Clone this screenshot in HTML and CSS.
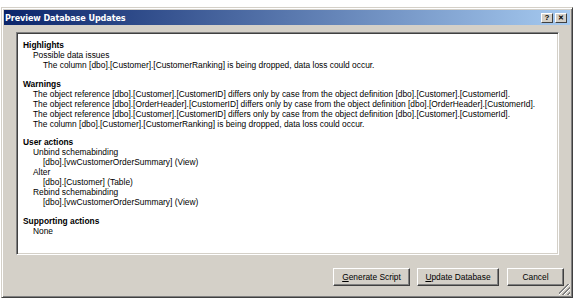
FILE: index.html
```html
<!DOCTYPE html>
<html lang="en">

<head>
    <title>Preview Database Updates</title>
    <meta charset="UTF-8">
    <link rel="stylesheet" href="styles.css">
</head>

<body>
    <div class="dlg">
        <div class="dlg-title">
            <div class="title">Preview Database Updates</div>
            <div class="dlg-caption-btns">
                <span class="cap-btn">?</span>
                <span class="cap-btn cap-close">&#x2715;</span>
            </div>
        </div>

        <div class="dlg-body">
            <div class="report">
                <div class="section">
                    <h4>Highlights</h4>
                    <div class="l1">Possible data issues</div>
                    <div class="l2">The column [dbo].[Customer].[CustomerRanking] is being dropped, data loss could occur.</div>
                </div>

                <div class="section">
                    <h4>Warnings</h4>
                    <div class="l1">The object reference [dbo].[Customer].[CustomerID] differs only by case from the object definition [dbo].[Customer].[CustomerId].</div>
                    <div class="l1">The object reference [dbo].[OrderHeader].[CustomerID] differs only by case from the object definition [dbo].[OrderHeader].[CustomerId].</div>
                    <div class="l1">The object reference [dbo].[Customer].[CustomerID] differs only by case from the object definition [dbo].[Customer].[CustomerId].</div>
                    <div class="l1">The column [dbo].[Customer].[CustomerRanking] is being dropped, data loss could occur.</div>
                </div>

                <div class="section">
                    <h4>User actions</h4>
                    <div class="l1">Unbind schemabinding</div>
                    <div class="l2">[dbo].[vwCustomerOrderSummary] (View)</div>
                    <div class="l1">Alter</div>
                    <div class="l2">[dbo].[Customer] (Table)</div>
                    <div class="l1">Rebind schemabinding</div>
                    <div class="l2">[dbo].[vwCustomerOrderSummary] (View)</div>
                </div>

                <div class="section">
                    <h4>Supporting actions</h4>
                    <div class="l1">None</div>
                </div>
            </div>

            <div class="dlg-buttons">
                <button class="btn btn-script"><u>G</u>enerate Script</button>
                <button class="btn btn-update"><u>U</u>pdate Database</button>
                <button class="btn btn-cancel">Cancel</button>
            </div>
        </div>
        <div class="grip"></div>
    </div>
</body>

</html>
```

FILE: styles.css
```css
* {
    box-sizing: border-box;
    font-family: 'Liberation Sans', Arial, sans-serif;
}

body {
    margin: 0;
    padding: 7px 0 0 1px;
    background-color: #ffffff;
    width: 578px;
    height: 304px;
    overflow: hidden;
}

.dlg {
    position: relative;
    width: 572px;
    height: 291px;
    background-color: #d4d0c8;
    border: 1px solid #404040;
    border-top-color: #d4d0c8;
    border-left-color: #d4d0c8;
    box-shadow: inset 1px 1px 0 #ffffff, inset -1px -1px 0 #808080;
    padding: 2px;
    display: flex;
    flex-direction: column;
}

.dlg-title {
    height: 15px;
    background: linear-gradient(to right, #0a246a, #a6caf0);
    display: flex;
    align-items: center;
    padding: 0 3px 0 1px;
}

.dlg-title .title {
    flex: 1;
    color: #ffffff;
    font-weight: bold;
    font-size: 8.1px;
    font-family: 'DejaVu Sans', sans-serif;
    letter-spacing: -0.1px;
}

.dlg-caption-btns {
    display: flex;
    gap: 2px;
}

.cap-btn {
    width: 12px;
    height: 10px;
    background-color: #d4d0c8;
    border: 1px solid #404040;
    border-top-color: #ffffff;
    border-left-color: #ffffff;
    font-size: 8px;
    font-weight: bold;
    line-height: 8px;
    text-align: center;
    color: #000000;
}

.cap-close {
    font-size: 7px;
}

.dlg-body {
    flex: 1;
    display: flex;
    flex-direction: column;
    padding: 7px 11px 8px 12px;
}

.report {
    height: 223px;
    background-color: #ffffff;
    border: 1px solid #ffffff;
    border-top-color: #808080;
    border-left-color: #808080;
    box-shadow: inset 1px 1px 0 #404040, inset -1px -1px 0 #d4d0c8;
    padding: 7px 6px;
    font-size: 8.4px;
    line-height: 10px;
    color: #000000;
}

.section + .section {
    margin-top: 8.5px;
}

.report h4 {
    margin: 0;
    font-size: 8.4px;
    font-weight: bold;
}

.l1 {
    padding-left: 10px;
}

.l2 {
    padding-left: 20px;
}

.dlg-buttons {
    display: flex;
    justify-content: flex-end;
    gap: 7px;
    margin-top: 13px;
    margin-right: -5px;
}

.btn {
    height: 18px;
    background-color: #d4d0c8;
    border: 1px solid #404040;
    border-top-color: #ffffff;
    border-left-color: #ffffff;
    box-shadow: inset -1px -1px 0 #808080;
    font-size: 8.4px;
    color: #000000;
    padding: 0;
}

.btn-script {
    width: 77px;
}

.btn-update {
    width: 82px;
}

.btn-cancel {
    width: 57px;
    margin-left: 1px;
}

.grip {
    position: absolute;
    right: 2px;
    bottom: 2px;
    width: 11px;
    height: 11px;
    background: linear-gradient(135deg, transparent 0 40%, #808080 40% 48%, #ffffff 48% 54%, transparent 54% 62%, #808080 62% 70%, #ffffff 70% 76%, transparent 76% 84%, #808080 84% 92%, #ffffff 92%);
}
```
